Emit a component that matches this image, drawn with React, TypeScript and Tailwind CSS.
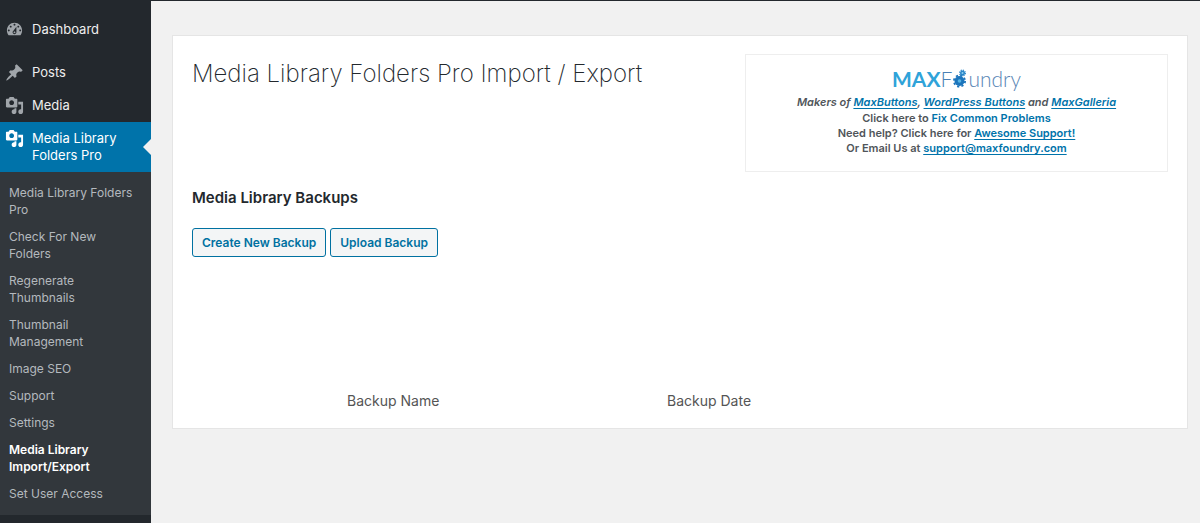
import type { ReactNode } from 'react';
import { clsx } from 'clsx';

const ICONS = {
  dashboard:
    'M3.76 16h12.48c1.1-1.37 1.76-3.11 1.76-5 0-4.42-3.58-8-8-8s-8 3.58-8 8c0 1.89.66 3.63 1.76 5zM10 4c.55 0 1 .45 1 1s-.45 1-1 1-1-.45-1-1 .45-1 1-1zM6 6c.55 0 1 .45 1 1s-.45 1-1 1-1-.45-1-1 .45-1 1-1zm8 0c.55 0 1 .45 1 1s-.45 1-1 1-1-.45-1-1 .45-1 1-1zm-5.37 5.55L12 7v6c0 1.1-.9 2-2 2s-2-.9-2-2c0-.57.24-1.08.63-1.45zM4 10c.55 0 1 .45 1 1s-.45 1-1 1-1-.45-1-1 .45-1 1-1zm12 0c.55 0 1 .45 1 1s-.45 1-1 1-1-.45-1-1 .45-1 1-1zm-5 3c0-.55-.45-1-1-1s-1 .45-1 1 .45 1 1 1 1-.45 1-1z',
  posts:
    'M10.44 3.02l1.82-1.82 6.36 6.35-1.83 1.82c-1.05-.68-2.48-.57-3.41.36l-.75.75c-.92.93-1.04 2.35-.35 3.41l-1.83 1.82-2.41-2.41-2.8 2.79c-.42.42-3.38 2.71-3.8 2.29s1.86-3.39 2.28-3.81l2.79-2.79L4.1 9.36l1.83-1.82c1.05.69 2.48.57 3.4-.36l.75-.75c.93-.92 1.05-2.35.36-3.41z',
  media:
    'M13 11V4c0-.55-.45-1-1-1h-1.67L9 1H5L3.67 3H2c-.55 0-1 .45-1 1v7c0 .55.45 1 1 1h10c.55 0 1-.45 1-1zM7 4.5c1.38 0 2.5 1.12 2.5 2.5S8.38 9.5 7 9.5 4.5 8.38 4.5 7 5.62 4.5 7 4.5zM14 6h5v10.5c0 1.38-1.12 2.5-2.5 2.5S14 17.88 14 16.5s1.12-2.5 2.5-2.5c.17 0 .34.02.5.05V9h-3V6zm-4 8.05V13h2v3.5c0 1.38-1.12 2.5-2.5 2.5S7 17.88 7 16.5 8.12 14 9.5 14c.17 0 .34.02.5.05z',
};

const SUBMENU = [
  'Media Library Folders Pro',
  'Check For New Folders',
  'Regenerate Thumbnails',
  'Thumbnail Management',
  'Image SEO',
  'Support',
  'Settings',
  'Media Library Import/Export',
  'Set User Access',
];

interface MenuItemProps {
  icon: keyof typeof ICONS;
  label: string;
  active?: boolean;
}

const MenuItem = ({ icon, label, active = false }: MenuItemProps) => (
  <a
    href="#"
    className={clsx(
      'relative flex items-start gap-2 pl-[5px] pr-6 py-2 text-[13px] leading-[17px]',
      active ? 'bg-[#0073aa] text-white' : 'text-[#eeeeee]'
    )}
  >
    <svg
      viewBox="0 0 20 20"
      className={clsx('w-[19px] h-[19px] shrink-0 -my-px', active ? 'fill-white' : 'fill-[#a0a5aa]')}
      aria-hidden="true"
    >
      <path d={ICONS[icon]} />
    </svg>
    <span>{label}</span>
    {active && (
      <span className="absolute right-0 top-1/2 -translate-y-1/2 border-y-8 border-r-8 border-y-transparent border-r-[#f1f1f1]" />
    )}
  </a>
);

const Sidebar = () => (
  <nav className="w-[151px] shrink-0 bg-[#23282d] pt-3">
    <MenuItem icon="dashboard" label="Dashboard" />
    <div className="h-[10px]" />
    <MenuItem icon="posts" label="Posts" />
    <MenuItem icon="media" label="Media" />
    <MenuItem icon="media" label="Media Library Folders Pro" active />
    <ul className="bg-[#32373c] pt-[7px] pb-2">
      {SUBMENU.map((item) => {
        const current = item === 'Media Library Import/Export';
        return (
          <li key={item}>
            <a
              href="#"
              className={clsx(
                'block pl-[9px] pr-3 py-[5px] text-[12px] leading-[17px]',
                current ? 'font-semibold text-white' : 'text-[#b4b9be]'
              )}
            >
              {item}
            </a>
          </li>
        );
      })}
    </ul>
  </nav>
);

// Two cogs that stand in for the "o" of Foundry
const Cogs = () => (
  <svg viewBox="0 0 16 20" className="w-4 h-5" aria-hidden="true">
    <circle cx="7.5" cy="12" r="5" fill="#1c75bc" />
    <circle cx="7.5" cy="12" r="5.6" fill="none" stroke="#1c75bc" strokeWidth="1.8" strokeDasharray="2.2 2.2" />
    <circle cx="7.5" cy="12" r="1.8" fill="#57b5e3" />
    <circle cx="10.5" cy="4" r="2.5" fill="#2a86c8" />
    <circle cx="10.5" cy="4" r="2.9" fill="none" stroke="#2a86c8" strokeWidth="1.2" strokeDasharray="1.2 1.08" />
    <circle cx="10.5" cy="4" r="1" fill="#8fd0ee" />
  </svg>
);

const Logo = () => (
  <div className="flex h-6 items-center justify-center font-['Lato',sans-serif] text-[21px] leading-6">
    <span className="font-bold text-[#2fa3d9]">MAX</span>
    <span className="font-light text-[#4a80b5]">F</span>
    <Cogs />
    <span className="font-light text-[#5a86b5]">undry</span>
  </div>
);

const TextLink = ({ children }: { children: ReactNode }) => (
  <a href="#" className="text-[#0073aa] underline underline-offset-2">
    {children}
  </a>
);

const SupportBox = () => (
  <aside className="w-[423px] shrink-0 border border-[#eeeeee] pt-3 pb-[15px] text-center text-[11px] leading-[15px] font-semibold text-[#50555a]">
    <Logo />
    <p className="mt-1 mb-px italic">
      Makers of <TextLink>MaxButtons</TextLink>, <TextLink>WordPress Buttons</TextLink> and{' '}
      <TextLink>MaxGalleria</TextLink>
    </p>
    <p>
      Click here to{' '}
      <a href="#" className="text-[#0073aa]">
        Fix Common Problems
      </a>
    </p>
    <p>
      Need help? Click here for <TextLink>Awesome Support!</TextLink>
    </p>
    <p>
      Or Email Us at <TextLink>support@maxfoundry.com</TextLink>
    </p>
  </aside>
);

const Button = ({ children }: { children: ReactNode }) => (
  <button
    type="button"
    className="h-[29px] rounded-[3px] border border-[#0071a1] bg-[#f3f5f6] px-[9px] text-[12px] font-semibold text-[#0071a1]"
  >
    {children}
  </button>
);

export default function App() {
  return (
    <div className="flex min-h-screen flex-col bg-[#f1f1f1] font-['Inter',sans-serif]">
      <header className="h-px bg-[#23282d]" />
      <div className="flex grow">
        <Sidebar />
        <main className="grow pt-[34px] pl-[21px] pr-3">
          <section className="border border-[#e5e5e5] bg-white pt-[18px] pb-[17px] px-[19px]">
            <div className="flex items-start justify-between">
              <h1 className="pt-1 text-[24px] leading-8 font-extralight text-[#23282d]">
                Media Library Folders Pro Import / Export
              </h1>
              <SupportBox />
            </div>
            <h2 className="mt-4 text-[15px] leading-5 font-semibold text-[#23282d]">Media Library Backups</h2>
            <div className="mt-5 flex gap-1">
              <Button>Create New Backup</Button>
              <Button>Upload Backup</Button>
            </div>
            <table className="mt-[134px] w-full table-fixed text-[14px] leading-5 text-[#555555]">
              <thead>
                <tr>
                  <td className="w-[155px]" />
                  <th className="w-[320px] text-left font-normal">Backup Name</th>
                  <th className="text-left font-normal">Backup Date</th>
                </tr>
              </thead>
            </table>
          </section>
        </main>
      </div>
    </div>
  );
}
